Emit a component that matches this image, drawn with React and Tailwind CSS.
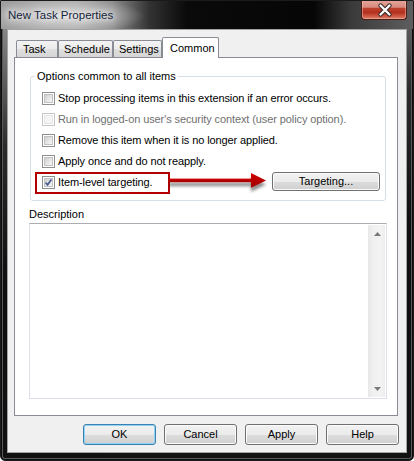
import React from 'react';

function Checkbox({ checked, disabled }) {
  return (
    <div
      className={`w-[13px] h-[13px] shrink-0 border bg-white p-[1px] ${
        disabled ? 'border-[#c6c6c6]' : 'border-[#8e8f8f]'
      }`}
    >
      <div
        className={`w-full h-full border relative ${
          disabled
            ? 'border-[#e6e6e6] bg-[#f4f4f4]'
            : 'border-[#c2c2c2] bg-[linear-gradient(135deg,#cfcfcf_0%,#e6e6e6_55%,#f7f7f7_100%)]'
        }`}
      >
        {checked && (
          <svg className="absolute -left-px -top-px" width="9" height="9" viewBox="0 0 9 9">
            <path d="M1.6 4.6 L3.6 6.8 L7.4 1.4" fill="none" stroke="#4a5f97" strokeWidth="1.7" />
          </svg>
        )}
      </div>
    </div>
  );
}

function WinButton({ children, primary, className = '' }) {
  return (
    <div
      className={`flex items-center justify-center rounded-[3px] border bg-[linear-gradient(to_bottom,#f2f2f2_0%,#ebebeb_50%,#dddddd_51%,#cfcfcf_100%)] ${
        primary
          ? 'border-[#3c7fb1] shadow-[inset_0_0_0_1px_#8fd3f5]'
          : 'border-[#707070] shadow-[inset_0_0_0_1px_#fbfbfb]'
      } ${className}`}
    >
      {children}
    </div>
  );
}

function Tab({ label, width, active, pad }) {
  if (active) {
    return (
      <div
        className="h-[21px] border border-b-0 border-[#898c95] bg-white rounded-t-[2px] flex items-center leading-[14px] pb-[1px]"
        style={{ width, paddingLeft: pad }}
      >
        {label}
      </div>
    );
  }
  return (
    <div
      className="mt-[3px] h-[17px] border border-b-0 border-[#898c95] rounded-t-[2px] flex items-center leading-[14px] bg-[linear-gradient(to_bottom,#f3f3f3_0%,#ebebeb_50%,#dfdfdf_51%,#d5d5d5_100%)]"
      style={{ width, paddingLeft: pad }}
    >
      {label}
    </div>
  );
}

const options = [
  { text: 'Stop processing items in this extension if an error occurs.' },
  { text: "Run in logged-on user's security context (user policy option).", disabled: true },
  { text: 'Remove this item when it is no longer applied.' },
  { text: 'Apply once and do not reapply.' },
];

export default function App() {
  return (
    <div className="w-[414px] h-[461px] flex flex-col overflow-hidden rounded-b-[5px] border border-[#1b1b1b] bg-[linear-gradient(172deg,#9a9a9a_0%,#7c7c7c_8%,#2c2c2c_28%,#0e0e0e_55%,#121212_100%)] shadow-[inset_0_0_0_1px_#0c0c0c,inset_0_0_0_2px_#5a5a5a] font-['Liberation_Sans',Arial,sans-serif] text-[11px] text-black select-none">
      {/* Title bar */}
      <div className="h-[28px] flex items-start shrink-0 bg-[radial-gradient(ellipse_80px_18px_at_64px_15px,rgba(222,222,222,0.9),rgba(222,222,222,0)),linear-gradient(90deg,#9e9e9e_0%,#a9a9a9_18%,#8e8e8e_27%,#333333_36%,#0a0a0a_45%,#060606_76%,#3a3a3a_85%,#5e5e5e_100%)]">
        <div className="pl-[7px] pt-[7px] text-[11.5px] leading-[15px] text-[#15253a] [text-shadow:0_0_6px_#fff,0_0_10px_#fff]">
          New Task Properties
        </div>
        <div className="ml-auto mr-[6px] -mt-px w-[46px] h-[20px] rounded-b-[4px] border border-t-0 border-[#4b1d17] shadow-[inset_0_0_0_1px_rgba(255,200,190,0.45)] bg-[linear-gradient(to_bottom,#e6a69c_0%,#d88a7e_38%,#c0402e_44%,#b3301f_66%,#cc5a46_85%,#dc8068_100%)] relative">
          <svg className="absolute left-0 top-0" width="46" height="20" viewBox="0 0 46 20">
            <g strokeLinecap="round">
              <path d="M18.5 5.5 L27.5 14.5 M27.5 5.5 L18.5 14.5" stroke="#3a2a28" strokeWidth="4.4" />
              <path d="M18.5 5.5 L27.5 14.5 M27.5 5.5 L18.5 14.5" stroke="#ffffff" strokeWidth="2.3" />
            </g>
          </svg>
        </div>
      </div>

      {/* Client area */}
      <div className="mx-[6px] mb-[7px] flex-1 border border-[#a3a3a3] bg-[#f0f0f0] flex flex-col pt-[7px] pl-[6px] pr-[8px]">
        {/* Tabs */}
        <div className="h-[21px] flex items-start pl-[2px] relative z-10 shrink-0">
          <Tab label="Task" width={42} pad={6} />
          <Tab label="Schedule" width={55} pad={5} />
          <Tab label="Settings" width={49} pad={5} />
          <Tab label="Common" width={57} pad={7} active />
        </div>

        {/* Panel */}
        <div className="-mt-px h-[359px] border border-[#898c95] bg-white flex flex-col shrink-0">
          <fieldset className="mt-[11px] ml-[15px] w-[356px] border border-[#d5dfe5] rounded-[3px]">
            <legend className="ml-[4px] px-[2px] leading-[14px]">Options common to all items</legend>
            <div className="pl-[11px] pr-[5px] pt-[5px] pb-[7px] flex flex-col">
              {options.map((o) => (
                <div key={o.text} className="h-[21px] flex items-center">
                  <Checkbox disabled={o.disabled} />
                  <span className={`ml-[3px] tracking-[-0.1px] ${o.disabled ? 'text-[#6f6f6f]' : ''}`}>{o.text}</span>
                </div>
              ))}
              <div className="h-[21px] flex items-center relative">
                <Checkbox checked />
                <span className="ml-[3px] tracking-[-0.1px]">Item-level targeting.</span>
                <div className="absolute -left-[7px] top-0 w-[135px] h-[22px] border-2 border-[#b30000]" />
                <svg className="absolute left-[127px] -top-[2px]" width="102" height="26" viewBox="0 0 102 26">
                  <defs>
                    <linearGradient id="arr" x1="0" y1="0" x2="0" y2="1">
                      <stop offset="0" stopColor="#d40000" />
                      <stop offset="1" stopColor="#9a0000" />
                    </linearGradient>
                    <filter id="sh" x="-10%" y="-30%" width="120%" height="190%">
                      <feDropShadow dx="0" dy="4" stdDeviation="1.4" floodColor="#000" floodOpacity="0.45" />
                    </filter>
                  </defs>
                  <g filter="url(#sh)" fill="url(#arr)">
                    <rect x="0" y="8.6" width="85" height="3.6" />
                    <polygon points="82,3 97,10.4 82,17.8" />
                  </g>
                </svg>
                <WinButton className="ml-auto self-start w-[108px] h-[19px]">Targeting...</WinButton>
              </div>
            </div>
          </fieldset>

          <div className="mt-[6px] ml-[14px] leading-[14px]">Description</div>
          <div className="mt-[2px] ml-[14px] w-[358px] h-[176px] border border-[#dbdfe6] border-t-[#abadb3] bg-white flex justify-end">
            <div className="w-[17px] my-px mr-px flex flex-col justify-between items-center pt-[7px] pb-[6px] border-l border-[#e8e8e8] bg-[linear-gradient(to_right,#eaeaea_0%,#f0f0f0_25%,#f3f3f3_75%,#ececec_100%)]">
              <svg width="7" height="4" viewBox="0 0 7 4">
                <polygon points="3.5,0 7,4 0,4" fill="#7a7a7a" />
              </svg>
              <svg width="7" height="4" viewBox="0 0 7 4">
                <polygon points="0,0 7,0 3.5,4" fill="#7a7a7a" />
              </svg>
            </div>
          </div>
        </div>

        {/* Buttons */}
        <div className="mt-[8px] -mr-px h-[21px] flex justify-end gap-[8px] shrink-0">
          <WinButton primary className="w-[73px] h-[21px]">OK</WinButton>
          <WinButton className="w-[73px] h-[21px]">Cancel</WinButton>
          <WinButton className="w-[73px] h-[21px]">Apply</WinButton>
          <WinButton className="w-[73px] h-[21px]">Help</WinButton>
        </div>
      </div>
    </div>
  );
}
